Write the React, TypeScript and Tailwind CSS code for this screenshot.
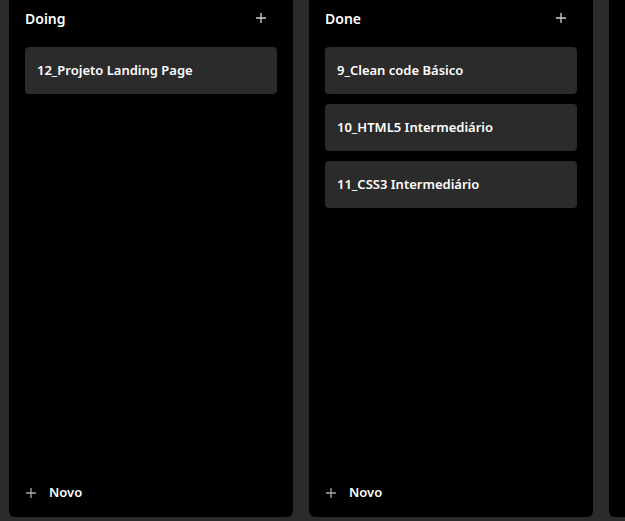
import React from 'react';

const columns = [
  { title: 'Doing', cards: ['12_Projeto Landing Page'] },
  { title: 'Done', cards: ['9_Clean code Básico', '10_HTML5 Intermediário', '11_CSS3 Intermediário'] },
];

function PlusIcon({ className }: { className?: string }) {
  return (
    <svg viewBox="0 0 10 10" className={className} fill="none" stroke="currentColor" strokeWidth="1.3">
      <path d="M5 0v10M0 5h10" />
    </svg>
  );
}

export default function App() {
  return (
    <div
      className="flex gap-4 pl-[9px] h-[521px] w-[625px] overflow-hidden bg-[#2b2b2b] text-white"
      style={{ fontFamily: '"Noto Sans", "Open Sans", sans-serif' }}
    >
      {columns.map((col) => (
        <div key={col.title} className="w-[284px] h-[517px] shrink-0 flex flex-col bg-black rounded-b-[6px]">
          {/* cabeçalho */}
          <div className="h-[36px] flex items-center justify-between pl-4 pr-[27px]">
            <span className="text-[14px] font-semibold">{col.title}</span>
            <PlusIcon className="w-[10px] h-[10px] text-[#d0d0d0]" />
          </div>

          <div className="flex-1 flex flex-col gap-[10px] px-4 pt-[11px]">
            {col.cards.map((c) => (
              <div key={c} className="h-[47px] flex items-center px-3 bg-[#2b2b2b] rounded-[4px] text-[13px] font-semibold">
                {c}
              </div>
            ))}
          </div>

          <div className="h-[48px] flex items-center gap-[13px] pl-[17px]">
            <PlusIcon className="w-[10px] h-[10px] text-[#a8a8a8]" />
            <span className="text-[13px] font-semibold">Novo</span>
          </div>
        </div>
      ))}
      {/* próxima coluna, cortada na borda */}
      <div className="w-[284px] h-[517px] shrink-0 bg-black rounded-b-[6px]" />
    </div>
  );
}
